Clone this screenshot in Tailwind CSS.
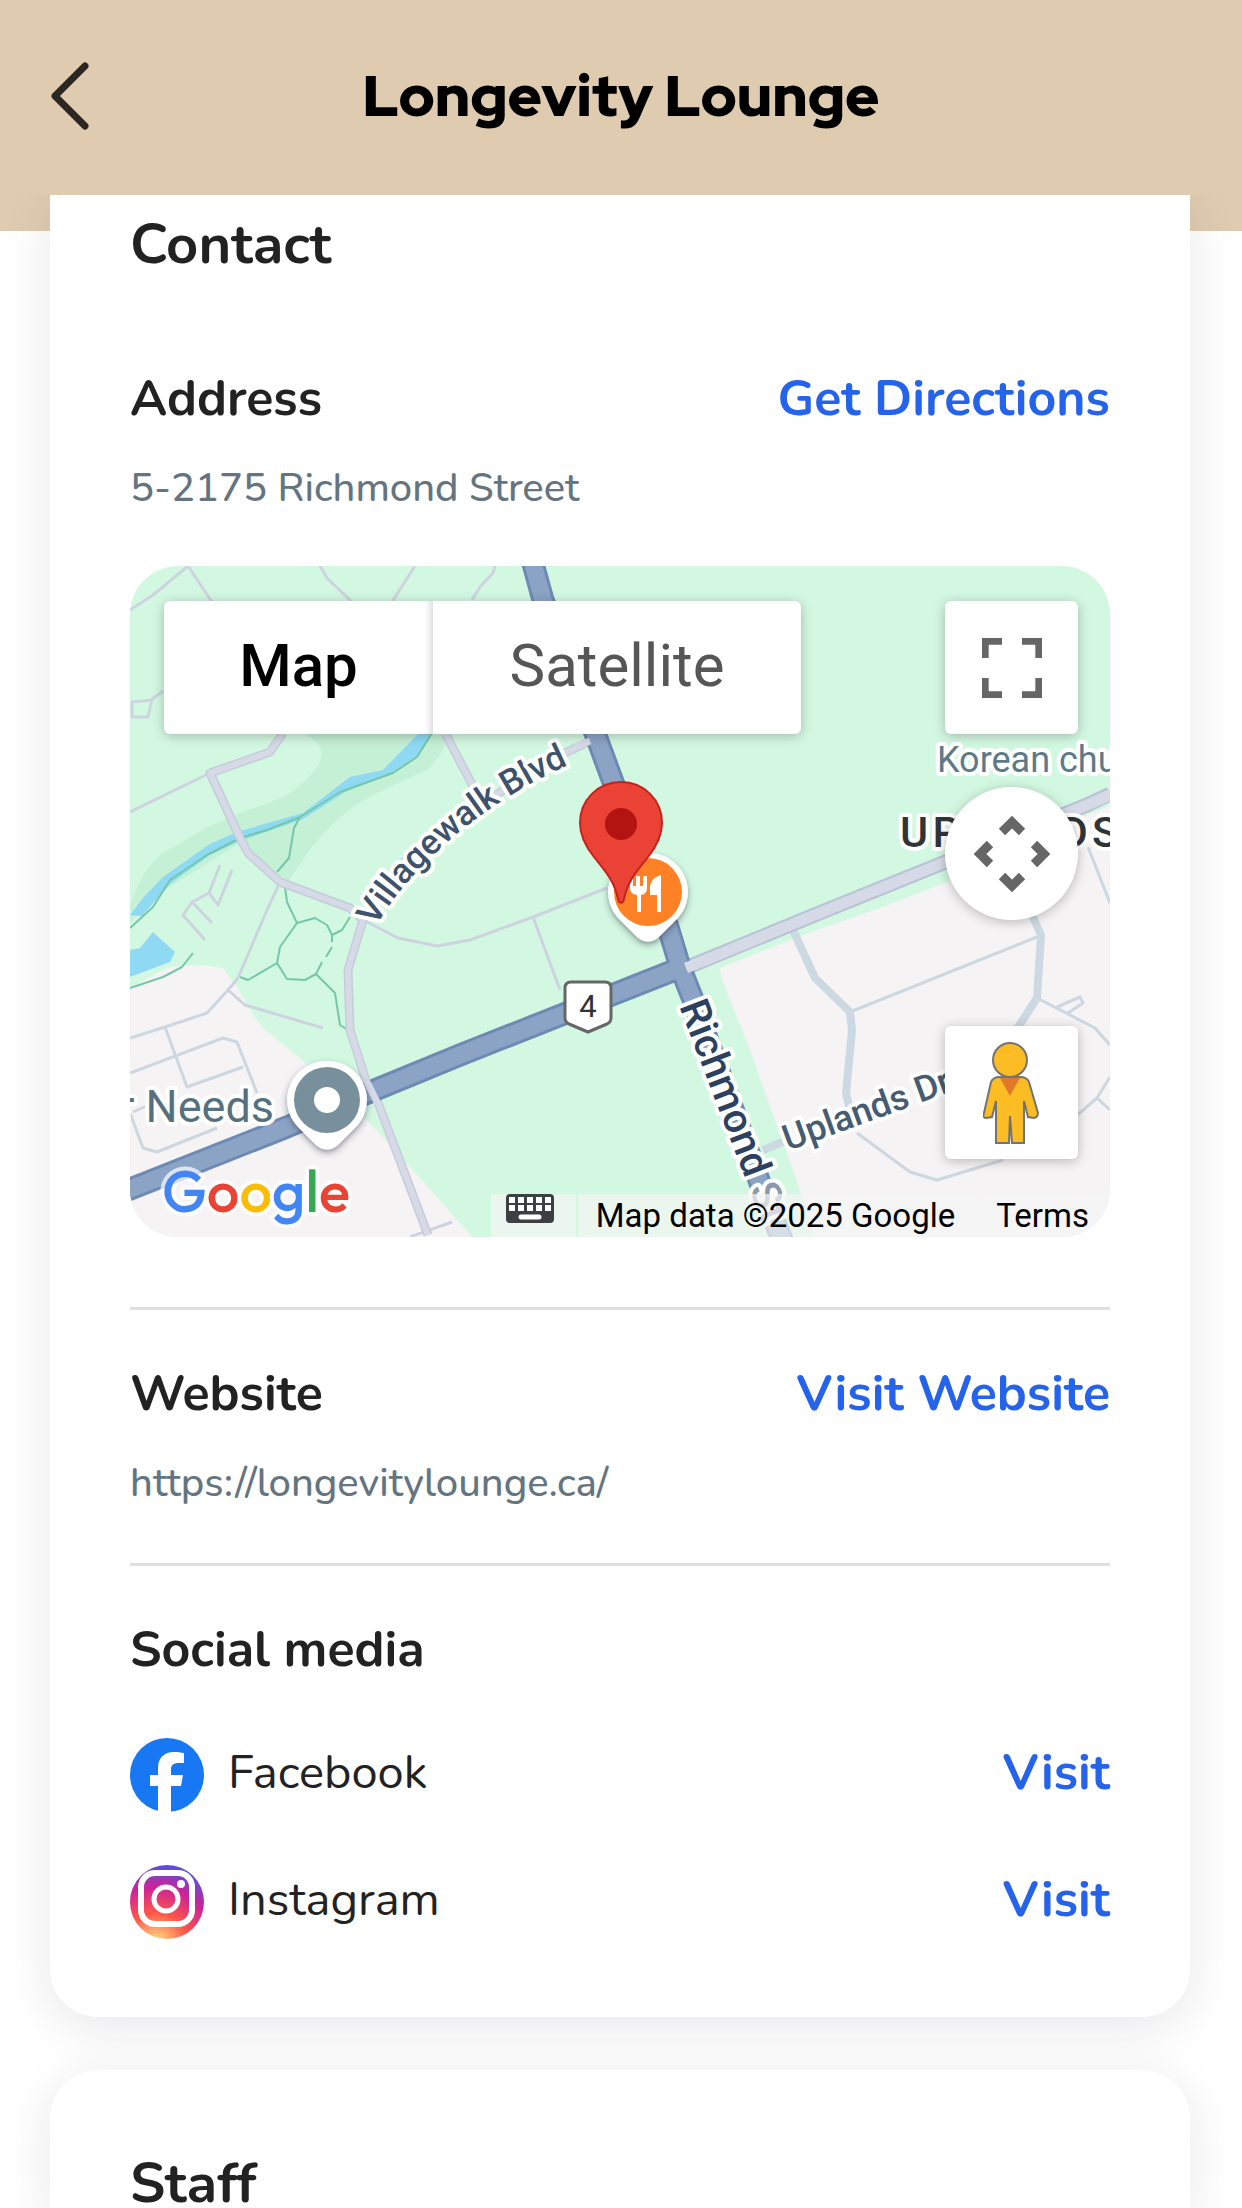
<!DOCTYPE html>
<html lang="en">
<head>
  <meta charset="UTF-8" />
  <meta name="viewport" content="width=device-width, initial-scale=1.0"/>
  <title>Longevity Lounge</title>
  <script src="https://cdn.jsdelivr.net/npm/@tailwindcss/browser@4"></script>
</head>
<body class="bg-white text-[#222222] font-['Nunito','Open_Sans',sans-serif] overflow-x-hidden">

  <header class="relative z-10 flex items-center h-[195px] px-[50px] pb-1 bg-[#dfcbb0]">
    <button type="button" aria-label="Back" class="w-10 h-[68px]">
      <svg viewBox="0 0 40 68" class="w-10 h-[68px]" fill="none" stroke="#2b2621" stroke-width="7" stroke-linecap="round" stroke-linejoin="round">
        <path d="M35 4 5 34l30 30"/>
      </svg>
    </button>
    <h1 class="flex-1 pr-10 text-center text-black text-[58px] leading-[80px] font-black font-['Red_Hat_Display','Montserrat','Lato',sans-serif]">Longevity Lounge</h1>
  </header>

  <main class="pl-[50px] pr-[52px] bg-[linear-gradient(#dfcbb0_36px,white_36px)]">

    <!-- Contact card -->
    <section class="px-20 pt-[10px] pb-[78px] bg-white rounded-b-[48px] shadow-[0_10px_50px_rgba(30,30,60,0.10)]">
      <h2 class="text-[56px] leading-[80px] font-bold">Contact</h2>

      <div class="mt-[84px] flex items-center justify-between text-[50px] leading-[60px] font-bold">
        <h3>Address</h3>
        <a href="#" class="text-[#2563eb]">Get Directions</a>
      </div>
      <p class="mt-[35px] text-[40px] leading-[48px] font-medium text-[#64757f]">5-2175 Richmond Street</p>

      <div class="relative mt-[54px] h-[671px] rounded-[48px] overflow-hidden bg-[#d3f8e2] font-['Roboto',sans-serif]">
        <svg viewBox="130 566 980 671" preserveAspectRatio="xMidYMid slice" class="absolute inset-0 w-full h-full" fill="none" stroke-linejoin="round">
          <defs>
            <filter id="drop" x="-30%" y="-30%" width="160%" height="160%">
              <feDropShadow dx="0" dy="3" stdDeviation="3" flood-color="#334" flood-opacity="0.5"/>
            </filter>
            <path id="villagewalk" d="M376 927C394 893 426 860 458 833C494 804 534 779 580 760"/>
          </defs>

          <!-- land -->
          <path fill="#c4f0d5" d="M300 730L317 743Q324 750 320 762Q312 778 290 793Q270 804 247 810L207 827L163 853Q142 868 130 907V922L165 890L240 843L288 882Q320 830 353 807Q370 795 427 770Q444 755 450 730z"/>
          <path fill="#f5f3f4" d="M130 988L167 968Q193 962 223 968L237 987L253 1015L263 1028L300 1058L367 1120L413 1170L475 1240H130zM720 968L803 935L880 908L947 882L1083 817L1110 805V1240H815L800 1190L750 1050L722 980z"/>

          <!-- water -->
          <path fill="#8fdaf2" d="M422 730L383 770L350 777L303 813L237 832L210 844L163 877L143 898L130 915L142 916L170 884L210 855L240 841L303 819L345 792L393 773L417 757L434 730zM130 950L140 948L153 932L175 952L170 962L130 977z"/>

          <!-- footpaths -->
          <g stroke="#75c7a9" stroke-width="2">
            <path d="M432 733L417 757L393 773L340 792L300 817L267 830L240 838L207 855L170 880L153 907L130 928"/>
            <path d="M300 817L294 828L289 858L277 872M285 887L287 902L297 923L315 918L327 925L332 935L342 930L350 917M332 935V942M332 947L326 957M322 962L316 974L305 980L287 979L277 963L280 947L297 923M277 963L248 980L240 977M316 974L335 993L340 1025L348 1030M130 988L163 977L182 967L193 953"/>
          </g>

          <!-- side streets -->
          <g stroke="#cdd4df" stroke-width="3">
            <path d="M130 610L153 595L188 566L212 602M320 566L327 578L352 602M415 566L392 602M495 566L493 573L480 587L472 600M132 702L152 700L148 717H132zM151 700L163 691M130 812L210 773M280 882L267 910L238 978L228 990L245 1005L323 1028M220 865L209 893L192 902L183 915L205 940M232 870L218 905L209 893M193 903L212 923M367 922L398 938L437 946L470 940L533 917L607 888M533 917L560 990M410 1237L452 1222"/>
          </g>
          <g stroke="#cdd7e0" stroke-width="3">
            <path d="M228 990L207 1013L165 1027L130 1038M130 1073L223 1038L237 1042L257 1093M165 1027L187 1087L243 1067M130 1113L143 1148L157 1152L217 1128M133 1112L160 1100M857 1133L910 1172L937 1180L1003 1160M850 1012L1037 937M1037 998L1095 1028L1110 1045M1110 1077L1097 1098L1075 1117M1097 1098L1110 1110M1057 1007L1080 997L1083 1003L1068 1013M1088 847L1110 903"/>
          </g>
          <g stroke="#cdd9e2" stroke-width="8">
            <path d="M793 930L815 978L850 1012L852 1030L846 1093L850 1110M1020 870L1033 917L1041 935L1037 998L1015 1032M763 1150L785 1141"/>
          </g>
          <path stroke="#c6ccda" stroke-width="9" d="M283 733L270 752L210 773L240 838L248 853L280 882L350 908L363 920L348 970L350 1030L368 1087L377 1100L428 1235M363 917L400 865L460 820L540 765L590 741M445 733L475 790"/>
          <path stroke="#d5dae6" stroke-width="6" d="M283 733L270 752L210 773L240 838L248 853L280 882L350 908L363 920L348 970L350 1030L368 1087L377 1100L428 1235M363 917L400 865L460 820L540 765L590 741M445 733L475 790"/>
          <path stroke="#bac3d6" stroke-width="15" d="M683 969L817 914L943 863L1087 805L1110 794"/>

          <!-- highways -->
          <path stroke="#6c8ab3" stroke-width="23" d="M532 560L543 600L595 733L613 782L668 927L680 967L692 997L760 1183L784 1245M680 968L460 1055L370 1092L287 1127L125 1191"/>
          <path stroke="#8ba4c5" stroke-width="17" d="M532 560L543 600L595 733L613 782L668 927L680 967L692 997L760 1183L784 1245M680 968L460 1055L370 1092L287 1127L125 1191"/>
          <path stroke="#d5dae6" stroke-width="11" d="M686 968L817 914L943 863L1087 805L1112 794"/>
          <path stroke="#d5dae6" stroke-width="7" d="M365 1078L378 1104M575 747L590 741"/>

          <!-- labels -->
          <g stroke="white" stroke-width="8" paint-order="stroke" font-size="36" font-weight="500" fill="#3f526c">
            <text font-size="35"><textPath href="#villagewalk">Villagewalk Blvd</textPath></text>
            <text transform="translate(788 1151) rotate(-20)" fill="#465c70">Uplands Dr</text>
            <text transform="translate(679 1006) rotate(69)" font-size="41" fill="#2c4060">Richmond <tspan fill="#8d98ab">St</tspan></text>
            <text x="937" y="772" font-weight="400" fill="#5d7a88">Korean church</text>
            <text x="900" y="847" font-size="43" fill="#2f3437" class="tracking-widest">UPLANDS</text>
            <text x="274" y="1122" text-anchor="end" font-size="45" font-weight="400" fill="#56717d">r Needs</text>
          </g>

          <!-- route 4 shield -->
          <path fill="white" stroke="#666" stroke-width="3" d="M571 982H605Q611 982 611 988V1018Q611 1022 607 1024L588 1032L569 1024Q565 1022 565 1018V988Q565 982 571 982z"/>
          <text x="588" y="1017" text-anchor="middle" font-size="31" fill="#333">4</text>

          <!-- place pins -->
          <g filter="url(#drop)" fill="white">
            <path d="M327 1061a39 39 0 0 1 30 65l-19 19q-11 9-22 0l-19-19a39 39 0 0 1 30-65z"/>
            <path d="M648 853a39 39 0 0 1 30 65l-19 19q-11 9-22 0l-19-19a39 39 0 0 1 30-65z"/>
          </g>
          <circle cx="327" cy="1100" r="33" fill="#78909c"/>
          <circle cx="327" cy="1100" r="13" fill="white"/>
          <circle cx="648" cy="892" r="34" fill="#ff8126"/>
          <path fill="white" d="M630 876h3v10h3v-10h4v10h3v-10h4v12q0 6-6 7v17h-4v-17q-7-1-7-7zM661 875v37h-4v-17h-7v-9q2-9 11-11z"/>
          <path fill="#ea4335" stroke="#c5221f" stroke-width="2" d="M621 782c-23 0-41 18-41 41 0 13 6 24 14 34 11 14 20 23 24 42 1 5 5 5 6 0 4-19 13-28 24-42 8-10 14-21 14-34 0-23-18-41-41-41z"/>
          <circle cx="621" cy="824" r="16" fill="#b31412"/>

          <text x="162" y="1212" stroke="white" stroke-opacity="0.7" stroke-width="8" paint-order="stroke" font-size="58" font-weight="500" class="font-['Product_Sans','Outfit','Figtree','Lato',sans-serif]"><tspan fill="#4285f4">G</tspan><tspan fill="#ea4335">o</tspan><tspan fill="#fbbc04">o</tspan><tspan fill="#4285f4">g</tspan><tspan fill="#34a853">l</tspan><tspan fill="#ea4335">e</tspan></text>
        </svg>

        <!-- map controls -->
        <div class="absolute inset-x-0 top-0 flex items-start justify-between pt-[35px] pl-[34px] pr-8">
          <div class="flex h-[133px] rounded-md bg-white shadow-[0_2px_12px_rgba(0,0,0,0.25)] text-[60px]">
            <button type="button" class="w-[269px] pb-1 rounded-l-md text-black font-medium shadow-[inset_-8px_0_8px_-6px_rgba(0,0,0,0.18)]">Map</button>
            <button type="button" class="w-[368px] pb-1 text-[#565656]">Satellite</button>
          </div>
          <div class="flex flex-col">
            <button type="button" aria-label="Toggle fullscreen view" class="flex items-center justify-center w-[133px] h-[133px] rounded-md bg-white shadow-[0_2px_12px_rgba(0,0,0,0.25)]">
              <svg viewBox="0 0 18 18" class="w-[60px] h-[60px]" fill="#666"><path d="M0 0v6h2V2h4V0H0zm16 0h-4v2h4v4h2V0h-2zm0 16h-4v2h6v-6h-2v4zM2 12H0v6h6v-2H2v-4z"/></svg>
            </button>
            <button type="button" aria-label="Map camera controls" class="mt-[53px] flex items-center justify-center w-[133px] h-[133px] rounded-full bg-white shadow-[0_2px_12px_rgba(0,0,0,0.25)]">
              <svg viewBox="0 0 78 78" class="w-[78px] h-[78px]" fill="none" stroke="#666" stroke-width="9">
                <path d="M29 17 39 7l10 10M29 61l10 10 10-10M17 29 7 39l10 10M61 29l10 10-10 10"/>
              </svg>
            </button>
            <button type="button" aria-label="Street View" class="mt-[106px] flex items-center justify-center w-[133px] h-[133px] rounded-md bg-white shadow-[0_2px_12px_rgba(0,0,0,0.25)]">
              <svg viewBox="0 0 58 102" class="w-[58px] h-[102px]" fill="#fbbc24" stroke="#737373" stroke-width="2">
                <path d="M17 35H37Q44 35 46 40L55 71Q55 75 51 76L45 75 41 59V101H29L27 74 26 101H13V59L9 75 3 76Q-1 75 1 71L8 40Q10 35 17 35z"/>
                <path d="M17 36H37L27 54z" fill="#e07a28" stroke="none"/>
                <circle cx="27" cy="18" r="17"/>
              </svg>
            </button>
          </div>
        </div>

        <!-- attribution -->
        <div class="absolute inset-x-0 bottom-0 flex justify-end gap-0.5 h-[43px] text-[33px] leading-[43px] text-black">
          <button type="button" aria-label="Keyboard shortcuts" class="w-[85px] pl-[15px] bg-[#f5f5f5]/70">
            <svg viewBox="0 0 48 43" class="w-12 h-[43px]">
              <rect width="48" height="29" rx="4" fill="#3c4043"/>
              <path stroke="white" stroke-width="6" stroke-dasharray="6 3" d="M3 6H46M3 14H46"/>
              <path stroke="white" stroke-width="5" stroke-linecap="round" d="M15 23H33"/>
            </svg>
          </button>
          <span class="pl-[18px] pr-[21px] bg-[#f5f5f5]/70">Map data ©2025 Google</span>
          <a href="#" class="pl-[18px] pr-[21px] bg-[#f5f5f5]/70">Terms</a>
        </div>
      </div>

      <hr class="mt-[70px] border-t-3 border-[#e0e0e0]" />

      <div class="mt-[54px] flex items-center justify-between text-[50px] leading-[60px] font-bold">
        <h3>Website</h3>
        <a href="#" class="text-[#2563eb]">Visit Website</a>
      </div>
      <p class="mt-[35px] text-[40px] leading-[48px] font-medium text-[#64757f]">https://longevitylounge.ca/</p>

      <hr class="mt-14 border-t-3 border-[#e0e0e0]" />

      <h3 class="mt-[54px] text-[50px] leading-[60px] font-bold">Social media</h3>
      <ul class="mt-[58px] flex flex-col gap-[53px] text-[47px] leading-[70px]">
        <li class="flex h-[74px]">
          <svg viewBox="0 0 74 74" class="w-[74px] h-[74px]">
            <circle cx="37" cy="37" r="37" fill="#1877f2"/>
            <path fill="white" d="M28 74V48H20V37H28V30C28 20 34 14 44 14 48 14 51 14.500 54 15V25H48C43 25 41 28 41 31V37H53L51 48H41V74z"/>
          </svg>
          <span class="ml-6">Facebook</span>
          <a href="#" aria-label="Visit Facebook" class="ml-auto text-[50px] font-bold text-[#2563eb]">Visit</a>
        </li>
        <li class="flex h-[74px]">
          <svg viewBox="0 0 74 74" class="w-[74px] h-[74px]">
            <defs>
              <radialGradient id="ig" cx="0.35" cy="1.08" r="1.05">
                <stop offset="0.05" stop-color="#ffdd80"/>
                <stop offset="0.42" stop-color="#ff5548"/>
                <stop offset="0.75" stop-color="#cc2299"/>
                <stop offset="1" stop-color="#5b4fd6"/>
              </radialGradient>
            </defs>
            <circle cx="37" cy="37" r="37" fill="url(#ig)"/>
            <g fill="none" stroke="white">
              <rect x="11" y="8" width="51" height="51" rx="14" stroke-width="6"/>
              <circle cx="36" cy="34" r="12" stroke-width="5"/>
            </g>
            <circle cx="51" cy="19" r="4" fill="white"/>
          </svg>
          <span class="ml-6">Instagram</span>
          <a href="#" aria-label="Visit Instagram" class="ml-auto text-[50px] font-bold text-[#2563eb]">Visit</a>
        </li>
      </ul>
    </section>

    <!-- Staff card -->
    <section class="mt-[53px] px-20 pt-[74px] bg-white rounded-t-[48px] shadow-[0_10px_50px_rgba(30,30,60,0.10)]">
      <h2 class="h-16 text-[56px] leading-[80px] font-bold">Staff</h2>
    </section>
  </main>

</body>
</html>
